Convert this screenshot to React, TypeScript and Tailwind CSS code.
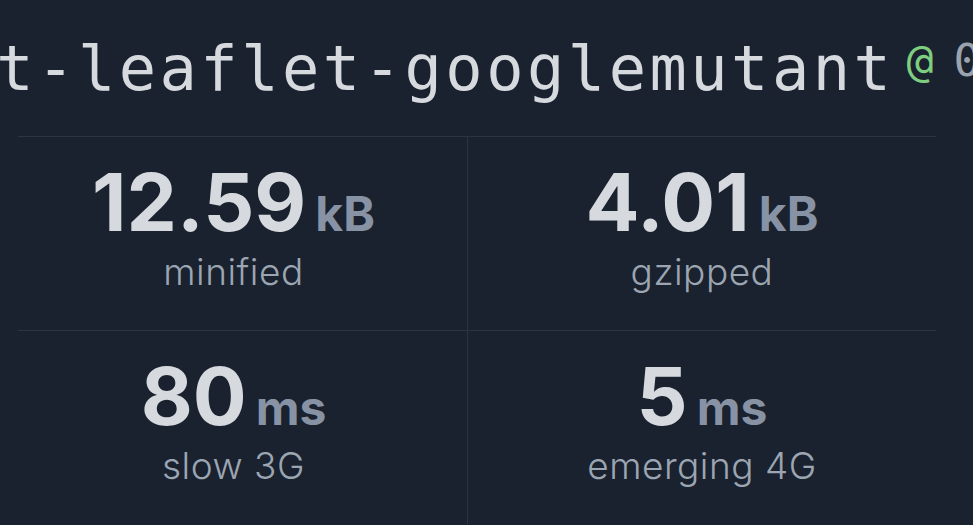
import React from 'react';

interface StatProps {
  value: string;
  unit: string;
  label: string;
  divider?: boolean;
}

const Stat = ({ value, unit, label, divider }: StatProps) => (
  <div
    className={`flex flex-col items-center pt-[25px] pb-[40px] ${divider ? 'border-r border-[#2a3442]' : ''}`}
    style={{ fontFamily: 'Inter, "Noto Sans", sans-serif' }}
  >
    <div className="flex items-baseline leading-none">
      <span className="text-[80px] font-bold text-[#d6d9de]">{value}</span>
      <span className="ml-[9px] text-[48px] font-bold text-[#8793a5]">{unit}</span>
    </div>
    <div className="mt-[11px] text-[37px] font-light leading-none text-[#9ca5b2] tracking-[0.5px]">{label}</div>
  </div>
);

const Rule = () => <div className="ml-[18px] h-px bg-[#2a3442]" />;

export default function App() {
  return (
    <div className="h-[525px] w-[973px] overflow-hidden bg-[#19222e]">
      <div className="w-[936px]">
        <div
          className="flex justify-center whitespace-nowrap pl-[13px] pt-[38px] pb-[36px] leading-none"
          style={{ fontFamily: '"DejaVu Sans Mono", monospace' }}
        >
          <span className="text-[62px] tracking-[3.5px] text-[#d6d9de]">react-leaflet-googlemutant</span>
          <span className="ml-3 mr-5 text-[45px] text-[#7fce80]">@</span>
          <span className="text-[45px] text-[#9aa3ae]">0.10.0</span>
        </div>
        <Rule />
        <div className="grid grid-cols-2">
          <Stat value="12.59" unit="kB" label="minified" divider />
          <Stat value="4.01" unit="kB" label="gzipped" />
        </div>
        <Rule />
        <div className="grid grid-cols-2">
          <Stat value="80" unit="ms" label="slow 3G" divider />
          <Stat value="5" unit="ms" label="emerging 4G" />
        </div>
      </div>
    </div>
  );
}
